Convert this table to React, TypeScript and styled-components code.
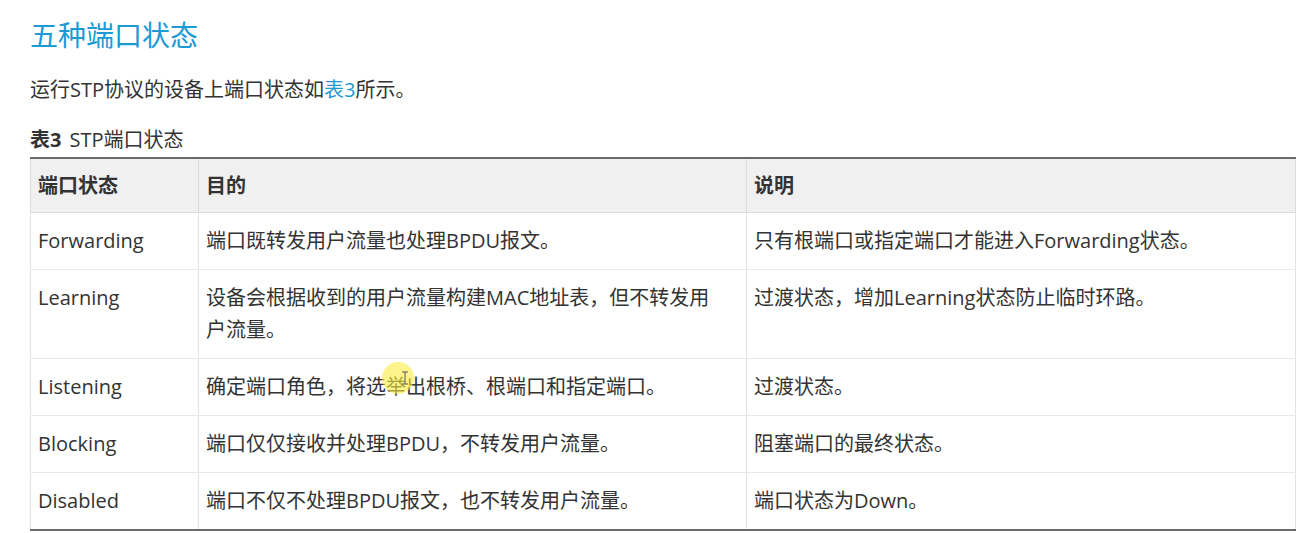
import styled, { createGlobalStyle } from "styled-components";

const GlobalStyle = createGlobalStyle`
  html, body {
    margin: 0;
    padding: 0;
    background: #fff;
  }
  body {
    font-family: "Open Sans", "Noto Sans CJK SC", sans-serif;
    color: #333;
  }
`;

const Page = styled.div`
  position: relative;
  padding: 17px 0 0 30px;
  width: 1266px;
`;

const Title = styled.h2`
  margin: 0;
  font-size: 28px;
  line-height: 36px;
  font-weight: 400;
  color: #1b9ad6;
`;

const Para = styled.p`
  margin: 21px 0 0;
  font-size: 20px;
  line-height: 32px;
`;

const Link = styled.a`
  color: #1b9ad6;
  text-decoration: none;
`;

const Caption = styled.div`
  margin: 18px 0 1px;
  font-size: 20px;
  line-height: 32px;

  b {
    font-weight: 700;
    margin-right: 8px;
  }
`;

const Table = styled.table`
  width: 1266px;
  table-layout: fixed;
  border-collapse: collapse;
  border-top: 2px solid #6b6b6b;
  border-bottom: 2px solid #6b6b6b;
  font-size: 20px;
  line-height: 32px;
`;

const Th = styled.th`
  background: #f0f0f0;
  text-align: left;
  font-weight: 700;
  padding: 11px 8px 10px 7px;
  border: 1px solid #dcdcdc;
  border-top: none;
`;

const Td = styled.td`
  vertical-align: top;
  padding: 12px 22px 12px 7px;
  border: 1px solid #e2e2e2;
  border-bottom-color: #e8e8e8;
`;

const Highlight = styled.div`
  position: absolute;
  left: 382px;
  top: 362px;
  width: 32px;
  height: 32px;
  border-radius: 50%;
  background: rgba(250, 236, 60, 0.6);
  pointer-events: none;
`;

const Caret = styled.svg`
  position: absolute;
  left: 401px;
  top: 371px;
  pointer-events: none;
`;

const rows = [
  {
    state: "Forwarding",
    purpose: "端口既转发用户流量也处理BPDU报文。",
    note: "只有根端口或指定端口才能进入Forwarding状态。",
  },
  {
    state: "Learning",
    purpose: "设备会根据收到的用户流量构建MAC地址表，但不转发用户流量。",
    note: "过渡状态，增加Learning状态防止临时环路。",
  },
  {
    state: "Listening",
    purpose: "确定端口角色，将选举出根桥、根端口和指定端口。",
    note: "过渡状态。",
  },
  {
    state: "Blocking",
    purpose: "端口仅仅接收并处理BPDU，不转发用户流量。",
    note: "阻塞端口的最终状态。",
  },
  {
    state: "Disabled",
    purpose: "端口不仅不处理BPDU报文，也不转发用户流量。",
    note: "端口状态为Down。",
  },
];

const App = () => {
  return (
    <>
      <GlobalStyle />
      <Page>
        <Title>五种端口状态</Title>
        <Para>
          运行STP协议的设备上端口状态如<Link href="#">表3</Link>所示。
        </Para>
        <Caption>
          <b>表3</b>STP端口状态
        </Caption>
        <Table>
          <colgroup>
            <col style={{ width: 168 }} />
            <col style={{ width: 548 }} />
            <col />
          </colgroup>
          <thead>
            <tr>
              <Th>端口状态</Th>
              <Th>目的</Th>
              <Th>说明</Th>
            </tr>
          </thead>
          <tbody>
            {rows.map((r) => (
              <tr key={r.state}>
                <Td>{r.state}</Td>
                <Td>{r.purpose}</Td>
                <Td>{r.note}</Td>
              </tr>
            ))}
          </tbody>
        </Table>
        <Highlight />
        <Caret width="8" height="14" viewBox="0 0 8 14">
          <path d="M1 1h6M4 1v12M1 13h6" stroke="#555" strokeWidth="1" fill="none" />
        </Caret>
      </Page>
    </>
  );
};

export default App;
